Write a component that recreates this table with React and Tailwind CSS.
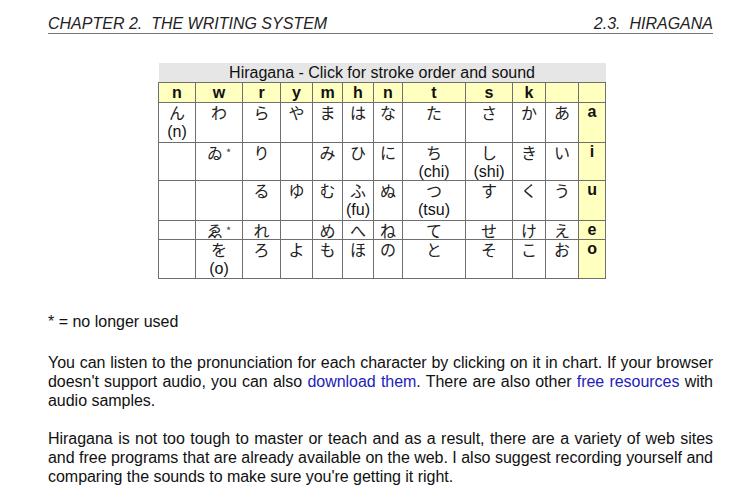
import React from "react";

const widths = [37, 47, 38, 32, 30, 31, 29, 63, 47, 33, 33, 27];
const heads = ["n", "w", "r", "y", "m", "h", "n", "t", "s", "k", "", ""];

const rows = [
  { h: 40, cells: [["ん", "(n)"], ["わ"], ["ら"], ["や"], ["ま"], ["は"], ["な"], ["た"], ["さ"], ["か"], ["あ"]], v: "a" },
  { h: 38, cells: [[""], ["ゐ", null, true], ["り"], [""], ["み"], ["ひ"], ["に"], ["ち", "(chi)"], ["し", "(shi)"], ["き"], ["い"]], v: "i" },
  { h: 40, cells: [[""], [""], ["る"], ["ゆ"], ["む"], ["ふ", "(fu)"], ["ぬ"], ["つ", "(tsu)"], ["す"], ["く"], ["う"]], v: "u" },
  { h: 18, cells: [[""], ["ゑ", null, true], ["れ"], [""], ["め"], ["へ"], ["ね"], ["て"], ["せ"], ["け"], ["え"]], v: "e" },
  { h: 39, cells: [[""], ["を", "(o)"], ["ろ"], ["よ"], ["も"], ["ほ"], ["の"], ["と"], ["そ"], ["こ"], ["お"]], v: "o" },
];

function Cell({ c }) {
  const [kana, roma, star] = c;
  return (
    <td className="border border-[#6f6f6f] p-0 text-center align-top">
      {kana ? (
        <div className="h-[18px] leading-[18px] font-['Noto_Sans_CJK_JP',sans-serif] text-[16px] text-[#222] overflow-visible">
          {kana}
          {star ? <span className="relative -top-[2px] ml-[3px] text-[11px] text-[#444]">*</span> : null}
        </div>
      ) : null}
      {roma ? <div className="h-[19px] leading-[19px] pt-[1px]">{roma}</div> : null}
    </td>
  );
}

export default function App() {
  return (
    <div className="w-[741px] h-[495px] overflow-hidden bg-white font-['Liberation_Sans',Arial,sans-serif] text-[16px] text-[#111]">
      <div className="pl-[48px] pr-[28px]">
        <div className="flex justify-between pt-[14px] leading-[19px] italic text-[#222] border-b border-[#777] whitespace-pre">
          <span>CHAPTER 2.  THE WRITING SYSTEM</span>
          <span>2.3.  HIRAGANA</span>
        </div>

        <div className="mt-[29px] ml-[110px]">
          <table className="table-fixed border-collapse w-[447px] leading-[19px]">
            <colgroup>
              {widths.map((w, i) => (
                <col key={i} style={{ width: w }} />
              ))}
            </colgroup>
            <tbody>
              <tr className="h-[19px]">
                <td colSpan={12} className="bg-[#e6e6e6] p-0 text-center text-[#111]">
                  Hiragana - Click for stroke order and sound
                </td>
              </tr>
              <tr className="h-[19px]">
                {heads.map((h, i) => (
                  <td key={i} className="border border-[#6f6f6f] bg-[#ffffc0] p-0 text-center font-bold">
                    {h}
                  </td>
                ))}
              </tr>
              {rows.map((r, ri) => (
                <tr key={ri} style={{ height: r.h }}>
                  {r.cells.map((c, ci) => (
                    <Cell key={ci} c={c} />
                  ))}
                  <td className="border border-[#6f6f6f] bg-[#ffffc0] p-0 text-center align-top font-bold leading-[18px]">{r.v}</td>
                </tr>
              ))}
            </tbody>
          </table>
        </div>

        <p className="mt-[33px] leading-[19px]">* = no longer used</p>
        <div className="tracking-[-0.03px]">
          <p className="mt-[22px] leading-[19px] text-justify">
            You can listen to the pronunciation for each character by clicking on it in chart. If your browser doesn't support audio, you can also{" "}
            <span className="text-[#2222bb]">download them</span>. There are also other{" "}
            <span className="text-[#2222bb]">free resources</span> with audio samples.
          </p>
          <p className="mt-[19px] leading-[19px] text-justify">
            Hiragana is not too tough to master or teach and as a result, there are a variety of web sites and free programs that are already available on the web. I also suggest recording yourself and comparing the sounds to make sure you're getting it right.
          </p>
        </div>
      </div>
    </div>
  );
}
